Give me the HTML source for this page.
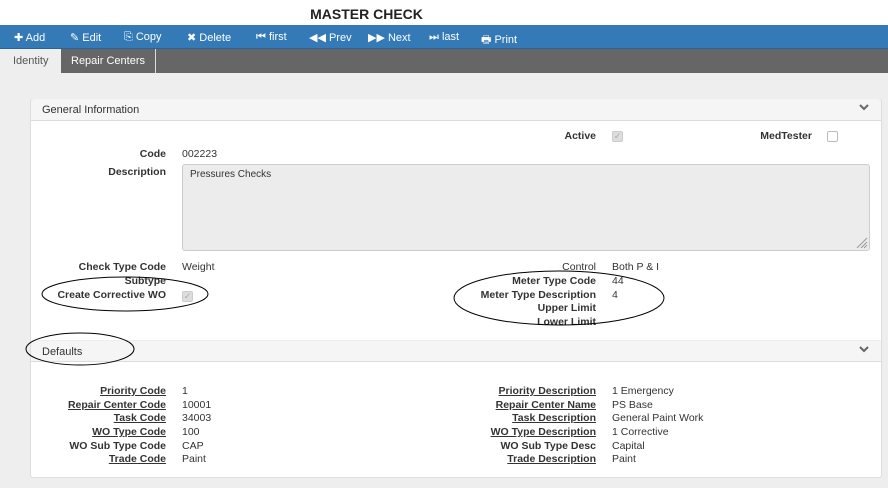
<!DOCTYPE html>
<html><head><style>
*{margin:0;padding:0;box-sizing:border-box}
body{width:888px;height:488px;background:#eee;font-family:"Liberation Sans",Arial,sans-serif;font-size:10.5px;color:#333;position:relative;overflow:hidden}
.a{position:absolute;white-space:nowrap}
.top{left:0;top:0;width:888px;height:25px;background:#fff}
.title{left:0;width:733px;top:6px;text-align:center;font-weight:bold;font-size:14px;color:#222}
.tb{left:0;top:25px;width:888px;height:24px;background:#337ab7;border-bottom:1px solid #2a6496}
.tb span{position:absolute;top:6px;color:#fff;font-size:11px}
.tabs{left:0;top:49px;width:888px;height:24px;background:#666}
.panel{left:30px;top:99px;width:852px;height:379px;background:#fff;border:1px solid #ddd;border-radius:3px}
.hd{left:31px;width:850px;height:22px;background:#f5f5f5;border-bottom:1px solid #ddd;font-size:11px;color:#333;padding:5px 11px}
.l{text-align:right;font-weight:bold;width:200px;color:#333}
.u{text-decoration:underline}
.cb{width:11px;height:11px;border:1px solid #bbb;border-radius:2px;background:#fff}
.cb.c{background:#ddd;border-color:#ccc;color:#aaa;font-size:9px;line-height:9px;text-align:center}
.chev{position:absolute;right:12px;top:4px}
</style></head><body>
<div class="a top"></div>
<div class="a title">MASTER CHECK</div>
<div class="a tb">
<span style="left:14px">✚ Add</span>
<span style="left:70px">✎ Edit</span>
<span style="left:124px">⎘ Copy</span>
<span style="left:187px">✖ Delete</span>
<span style="left:256px">⏮ first</span>
<span style="left:309px">◀◀ Prev</span>
<span style="left:368px">▶▶ Next</span>
<span style="left:429px">⏭ last</span>
<span style="left:481px">🖶 Print</span>
</div>
<div class="a tabs">
<div class="a" style="left:0;top:0;width:61px;height:24px;background:#eee;color:#555;padding:6px 13px;font-size:11px">Identity</div>
<div class="a" style="left:71px;top:6px;color:#fff;font-size:11px">Repair Centers</div>
<div class="a" style="left:155px;top:0;width:1px;height:24px;background:#ddd"></div>
</div>
<div class="a panel"></div>
<div class="a hd" style="top:99px;border-radius:3px 3px 0 0">General Information<svg class="chev" width="10" height="8"><path d="M1 2l4 4 4-4" fill="none" stroke="#666" stroke-width="2"/></svg></div>
<div class="a l" style="left:396px;top:130px">Active</div><div class="a cb c" style="left:612px;top:131px">✓</div>
<div class="a l" style="left:612px;top:130px">MedTester</div><div class="a cb" style="left:827px;top:131px"></div>
<div class="a l" style="left:-34px;top:148px">Code</div><div class="a" style="left:182px;top:148px">002223</div>
<div class="a l" style="left:-34px;top:166px">Description</div>
<div class="a" style="left:182px;top:164px;width:688px;height:87px;background:#ececec;border:1px solid #ccc;border-radius:3px;padding:4px 7px;font-size:10px">Pressures Checks</div>
<div class="a l" style="left:-34px;top:261px">Check Type Code</div><div class="a" style="left:182px;top:261px">Weight</div>
<div class="a l" style="left:-34px;top:275px">Subtype</div>
<div class="a l" style="left:-34px;top:289px">Create Corrective WO</div><div class="a cb c" style="left:182px;top:291px">✓</div>
<div class="a l" style="left:396px;top:261px;font-weight:normal">Control</div><div class="a" style="left:612px;top:261px">Both P &amp; I</div>
<div class="a l" style="left:396px;top:275px">Meter Type Code</div><div class="a" style="left:612px;top:275px">44</div>
<div class="a l" style="left:396px;top:289px">Meter Type Description</div><div class="a" style="left:612px;top:289px">4</div>
<div class="a l" style="left:396px;top:302px">Upper Limit</div>
<div class="a l" style="left:396px;top:316px">Lower Limit</div>
<div class="a hd" style="top:340px;border-top:1px solid #eee">Defaults<svg class="chev" width="10" height="8"><path d="M1 2l4 4 4-4" fill="none" stroke="#666" stroke-width="2"/></svg></div>
<svg class="a" style="left:0;top:0" width="888" height="488"><g fill="none" stroke="#000" stroke-width="1"><ellipse cx="125" cy="294" rx="83" ry="17"/><ellipse cx="559" cy="298" rx="105" ry="27"/><ellipse cx="80" cy="349" rx="54" ry="16"/></g><g stroke="#999"><line x1="857" y1="248" x2="867" y2="238"/><line x1="861" y1="248" x2="867" y2="242"/><line x1="864" y1="248" x2="867" y2="245"/></g></svg>
<div class="a l u" style="left:-34px;top:385px">Priority Code</div><div class="a" style="left:182px;top:385px">1</div>
<div class="a l u" style="left:-34px;top:399px">Repair Center Code</div><div class="a" style="left:182px;top:399px">10001</div>
<div class="a l u" style="left:-34px;top:412px">Task Code</div><div class="a" style="left:182px;top:412px">34003</div>
<div class="a l u" style="left:-34px;top:426px">WO Type Code</div><div class="a" style="left:182px;top:426px">100</div>
<div class="a l" style="left:-34px;top:440px">WO Sub Type Code</div><div class="a" style="left:182px;top:440px">CAP</div>
<div class="a l u" style="left:-34px;top:453px">Trade Code</div><div class="a" style="left:182px;top:453px">Paint</div>
<div class="a l u" style="left:396px;top:385px">Priority Description</div><div class="a" style="left:612px;top:385px">1 Emergency</div>
<div class="a l u" style="left:396px;top:399px">Repair Center Name</div><div class="a" style="left:612px;top:399px">PS Base</div>
<div class="a l u" style="left:396px;top:412px">Task Description</div><div class="a" style="left:612px;top:412px">General Paint Work</div>
<div class="a l u" style="left:396px;top:426px">WO Type Description</div><div class="a" style="left:612px;top:426px">1 Corrective</div>
<div class="a l" style="left:396px;top:440px">WO Sub Type Desc</div><div class="a" style="left:612px;top:440px">Capital</div>
<div class="a l u" style="left:396px;top:453px">Trade Description</div><div class="a" style="left:612px;top:453px">Paint</div>
</body></html>
